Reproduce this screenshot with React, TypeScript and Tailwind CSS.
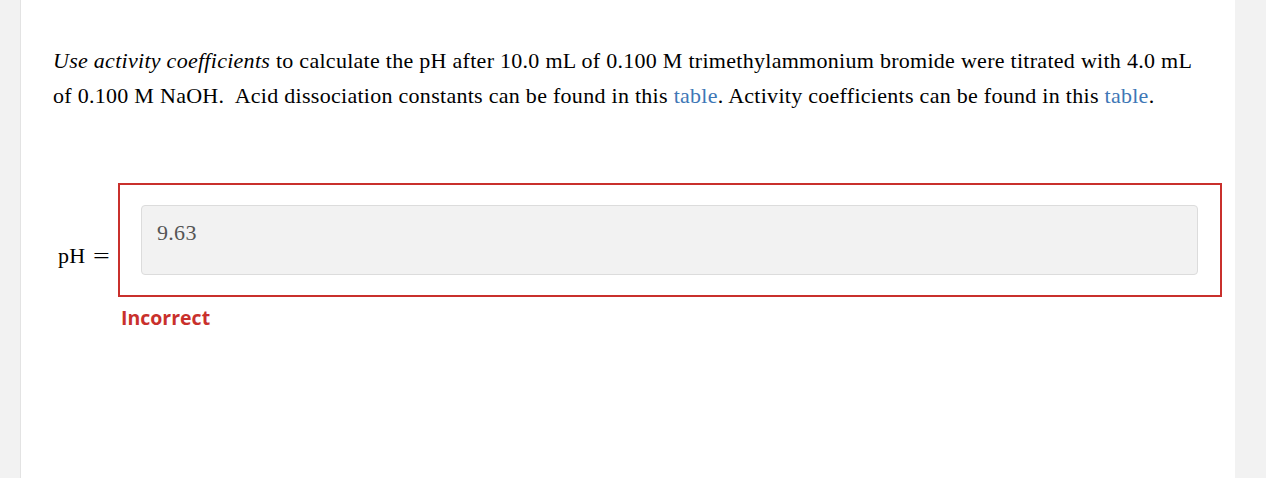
import React from "react";

export default function App() {
  return (
    <div className="w-[1266px] h-[478px] bg-[#f2f2f2] flex overflow-hidden">
      <div className="ml-[20px] w-[1215px] h-full bg-white border-l border-[#e3e3e3] pl-[32px] pr-[13px] pt-[43px]">
        <p
          className="text-[22px] leading-[35px] tracking-[0.28px] text-black w-[1160px]"
          style={{ fontFamily: '"Liberation Serif", "Times New Roman", serif' }}
        >
          <i>Use activity coefficients</i> to calculate the pH after 10.0 mL of 0.100 M trimethylammonium bromide were titrated with 4.0 mL of 0.100 M NaOH.&nbsp; Acid dissociation constants can be found in this{" "}
          <span className="text-[#3e77b6]">table</span>. Activity coefficients can be found in this{" "}
          <span className="text-[#3e77b6]">table</span>.
        </p>
        <div className="mt-[70px] flex items-start">
          <div
            className="w-[65px] pl-[5px] pt-[61px] text-[22px] leading-[24px] tracking-[0.3px] text-black whitespace-nowrap"
            style={{ fontFamily: '"Liberation Serif", "Times New Roman", serif' }}
          >
            pH <span className="inline-block ml-[2px] scale-x-[1.35] origin-left">=</span>
          </div>
          <div className="flex flex-col">
            <div className="w-[1104px] h-[114px] border-2 border-[#c9302c] px-[21px] pt-[20px]">
              <div
                className="h-[70px] w-[1057px] bg-[#f2f2f2] border border-[#dcdcdc] rounded-[4px] pl-[15px] pt-[15px] text-[22px] leading-[24px] tracking-[0.3px] text-[#555555]"
                style={{ fontFamily: '"Liberation Serif", "Times New Roman", serif' }}
              >
                9.63
              </div>
            </div>
            <div
              className="mt-[8px] pl-[3px] text-[19.5px] leading-[26px] font-bold text-[#c9302c]"
              style={{ fontFamily: '"Open Sans", "Noto Sans", sans-serif' }}
            >
              Incorrect
            </div>
          </div>
        </div>
      </div>
    </div>
  );
}
